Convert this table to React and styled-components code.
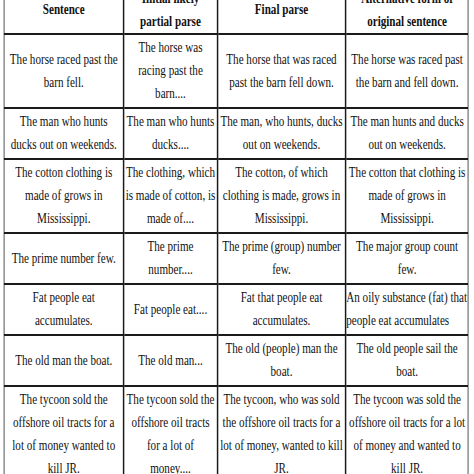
import React from "react"
import styled, { createGlobalStyle } from "styled-components"

const serif = `"Times New Roman", "Liberation Serif", Tinos, "Nimbus Roman", "DejaVu Serif", serif`

const Global = createGlobalStyle`
  html, body {
    margin: 0;
    padding: 0;
    background: #fff;
    width: 474px;
    height: 474px;
    overflow: hidden;
    font-family: ${serif};
  }
`

// the scan is squeezed horizontally, so the table is laid out wide and scaled in X
const Squeeze = styled.div`
  width: 640px;
  transform: scale(0.74, 1);
  transform-origin: 0 0;
`

const Table = styled.table`
  margin: -13.3px 0 0 5.4px;
  width: 627px;
  table-layout: fixed;
  border-collapse: collapse;
`

const Cell = styled.td`
  font-family: ${serif};
  font-size: 15px;
  line-height: 23.1px;
  color: #111;
  border-left: 2.2px solid #1a1a1a;
  border-right: 2.2px solid #1a1a1a;
  border-bottom: 2px solid #1a1a1a;
  padding: 1.36px 0;
  text-align: ${p => (p.$left ? "left" : "center")};
  vertical-align: middle;
  white-space: nowrap;
  overflow: hidden;
  &:first-child {
    border-left-width: 1.4px;
  }
  &:last-child {
    border-right-width: 1.7px;
  }
`

const Head = styled(Cell).attrs({ as: "th" })`
  font-weight: bold;
  padding: 0;
`

const widths = [161, 127, 173, 166]

const header = [
  ["Sentence"],
  ["Initial likely", "partial parse"],
  ["Final parse"],
  ["Alternative form of", "original sentence"],
]

const rows = [
  [
    ["The horse raced past the", "barn fell."],
    ["The horse was", "racing past the", "barn...."],
    ["The horse that was raced", "past the barn fell down."],
    ["The horse was raced past", "the barn and fell down."],
  ],
  [
    ["The man who hunts", "ducks out on weekends."],
    ["The man who hunts", "ducks...."],
    ["The man, who hunts, ducks", "out on weekends."],
    ["The man hunts and ducks", "out on weekends."],
  ],
  [
    ["The cotton clothing is", "made of grows in", "Mississippi."],
    ["The clothing, which", "is made of cotton, is", "made of...."],
    ["The cotton, of which", "clothing is made, grows in", "Mississippi."],
    ["The cotton that clothing is", "made of grows in", "Mississippi."],
  ],
  [
    ["The prime number few."],
    ["The prime", "number...."],
    ["The prime (group) number", "few."],
    ["The major group count", "few."],
  ],
  [
    ["Fat people eat", "accumulates."],
    ["Fat people eat...."],
    ["Fat that people eat", "accumulates."],
    ["An oily substance (fat) that", "people eat accumulates"],
  ],
  [
    ["The old man the boat."],
    ["The old man..."],
    ["The old (people) man the", "boat."],
    ["The old people sail the", "boat."],
  ],
  [
    ["The tycoon sold the", "offshore oil tracts for a", "lot of money wanted to", "kill JR."],
    ["The tycoon sold the", "offshore oil tracts", "for a lot of", "money...."],
    ["The tycoon, who was sold", "the offshore oil tracts for a", "lot of money, wanted to kill", "JR."],
    ["The tycoon was sold the", "offshore oil tracts for a lot", "of money and wanted to", "kill JR."],
  ],
]

function Lines({ lines }) {
  return lines.map((l, i) => (
    <React.Fragment key={i}>
      {i > 0 && <br />}
      {l}
    </React.Fragment>
  ))
}

export default function App() {
  return (
    <>
      <Global />
      <Squeeze>
        <Table>
          <colgroup>
            {widths.map((w, i) => <col key={i} style={{ width: w }} />)}
          </colgroup>
          <thead>
            <tr>
              {header.map((h, i) => (
                <Head key={i}><Lines lines={h} /></Head>
              ))}
            </tr>
          </thead>
          <tbody>
            {rows.map((r, ri) => (
              <tr key={ri}>
                {r.map((c, ci) => (
                  <Cell key={ci} $left={ri === 4 && ci === 3}>
                    <Lines lines={c} />
                  </Cell>
                ))}
              </tr>
            ))}
          </tbody>
        </Table>
      </Squeeze>
    </>
  )
}
